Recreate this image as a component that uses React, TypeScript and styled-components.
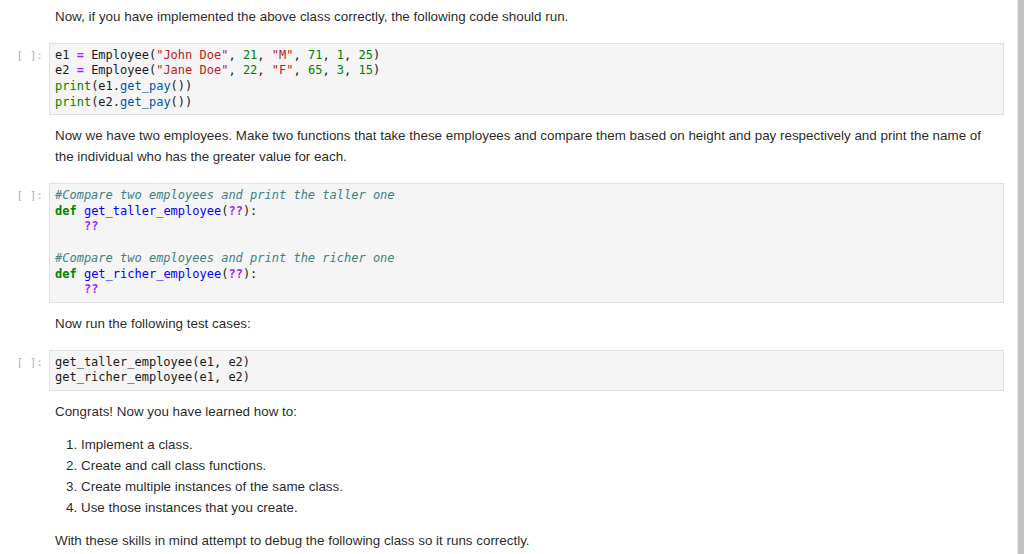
import styled, { createGlobalStyle, css } from 'styled-components';

const GlobalStyle = createGlobalStyle`
  html, body {
    margin: 0;
    padding: 0;
    background: #ffffff;
  }
  #root {
    height: 554px;
    overflow: hidden;
  }
`;

const Page = styled.div`
  display: flex;
  height: 554px;
  width: 1024px;
  overflow: hidden;
`;

const Notebook = styled.div`
  flex: 1;
  display: flex;
  flex-direction: column;
  padding-right: 13px;
`;

const Scrollbar = styled.div`
  width: 6px;
  background: #c2c2c2;
  border-left: 1px solid #ececec;
`;

const CellRow = styled.div`
  display: flex;
  align-items: flex-start;
`;

const MarkdownRow = styled(CellRow)`
  padding: 9.5px 0 16px;

  &:first-child {
    padding-top: 5.5px;
  }
`;

const Prompt = styled.div`
  width: 49px;
  flex: none;
  box-sizing: border-box;
  padding: 5px 6px 0 0;
  text-align: right;
  font-family: "DejaVu Sans Mono", monospace;
  font-size: 11px;
  line-height: 15.73px;
  color: #b0b0b0;
  white-space: pre;
`;

const CodeBox = styled.div`
  flex: 1;
  background: #f5f5f5;
  border: 1px solid #e0e0e0;
  padding: 4px 5px;
`;

const Code = styled.pre`
  margin: 0;
  font-family: "DejaVu Sans Mono", monospace;
  font-size: 12px;
  line-height: 15.73px;
  color: #1a1a1a;
  white-space: pre;
`;

type Kind = 'op' | 'str' | 'num' | 'builtin' | 'prop' | 'kw' | 'def' | 'comment' | 'q';

const kindStyles: Record<Kind, ReturnType<typeof css>> = {
  op: css`color: #aa22ff; font-weight: bold;`,
  str: css`color: #ba2121;`,
  num: css`color: #008000;`,
  builtin: css`color: #008000;`,
  prop: css`color: #0055aa;`,
  kw: css`color: #008000; font-weight: bold;`,
  def: css`color: #0000ff;`,
  comment: css`color: #408080; font-style: italic;`,
  q: css`color: #aa22ff; font-weight: bold;`,
};

const Tok = styled.span<{ $kind: Kind }>`
  ${({ $kind }) => kindStyles[$kind]}
`;

const Markdown = styled.div`
  flex: 1;
  padding: 0 6px;
  font-family: "Liberation Sans", Arial, sans-serif;
  font-size: 13.4px;
  line-height: 21px;
  color: rgba(0, 0, 0, 0.87);

  p {
    margin: 0 0 12px;
  }
  p:last-child {
    margin-bottom: 0;
  }
`;

const List = styled.ol`
  margin: 0 0 12px;
  padding-left: 26px;
`;

const CodeCell = ({ children }: { children: React.ReactNode }) => (
  <CellRow>
    <Prompt>[ ]:</Prompt>
    <CodeBox>
      <Code>{children}</Code>
    </CodeBox>
  </CellRow>
);

const MarkdownCell = ({ children }: { children: React.ReactNode }) => (
  <MarkdownRow>
    <Prompt />
    <Markdown>{children}</Markdown>
  </MarkdownRow>
);

const skills = [
  'Implement a class.',
  'Create and call class functions.',
  'Create multiple instances of the same class.',
  'Use those instances that you create.',
];

const App = () => (
  <Page>
    <GlobalStyle />
    <Notebook>
      <MarkdownCell>
        <p>Now, if you have implemented the above class correctly, the following code should run.</p>
      </MarkdownCell>

      <CodeCell>
        e1 <Tok $kind="op">=</Tok> Employee(<Tok $kind="str">"John Doe"</Tok>, <Tok $kind="num">21</Tok>, <Tok $kind="str">"M"</Tok>, <Tok $kind="num">71</Tok>, <Tok $kind="num">1</Tok>, <Tok $kind="num">25</Tok>){'\n'}
        e2 <Tok $kind="op">=</Tok> Employee(<Tok $kind="str">"Jane Doe"</Tok>, <Tok $kind="num">22</Tok>, <Tok $kind="str">"F"</Tok>, <Tok $kind="num">65</Tok>, <Tok $kind="num">3</Tok>, <Tok $kind="num">15</Tok>){'\n'}
        <Tok $kind="builtin">print</Tok>(e1.<Tok $kind="prop">get_pay</Tok>()){'\n'}
        <Tok $kind="builtin">print</Tok>(e2.<Tok $kind="prop">get_pay</Tok>())
      </CodeCell>

      <MarkdownCell>
        <p>
          Now we have two employees. Make two functions that take these employees and compare them based on height and pay respectively and print the name of the individual who has the greater value for each.
        </p>
      </MarkdownCell>

      <CodeCell>
        <Tok $kind="comment">#Compare two employees and print the taller one</Tok>{'\n'}
        <Tok $kind="kw">def</Tok> <Tok $kind="def">get_taller_employee</Tok>(<Tok $kind="q">??</Tok>):{'\n'}
        {'    '}<Tok $kind="q">??</Tok>{'\n'}
        {'\n'}
        <Tok $kind="comment">#Compare two employees and print the richer one</Tok>{'\n'}
        <Tok $kind="kw">def</Tok> <Tok $kind="def">get_richer_employee</Tok>(<Tok $kind="q">??</Tok>):{'\n'}
        {'    '}<Tok $kind="q">??</Tok>
      </CodeCell>

      <MarkdownCell>
        <p>Now run the following test cases:</p>
      </MarkdownCell>

      <CodeCell>
        get_taller_employee(e1, e2){'\n'}
        get_richer_employee(e1, e2)
      </CodeCell>

      <MarkdownCell>
        <p>Congrats! Now you have learned how to:</p>
        <List>
          {skills.map(s => (
            <li key={s}>{s}</li>
          ))}
        </List>
        <p>With these skills in mind attempt to debug the following class so it runs correctly.</p>
      </MarkdownCell>
    </Notebook>
    <Scrollbar />
  </Page>
);

export default App;
